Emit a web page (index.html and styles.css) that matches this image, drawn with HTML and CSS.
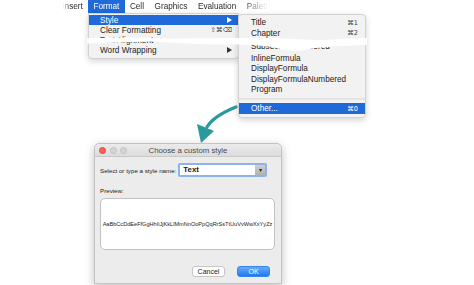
FILE: index.html
```html
<!DOCTYPE html>
<html lang="en">
<head>
  <meta charset="UTF-8">
  <title>Choose a custom style</title>
  <link rel="stylesheet" href="styles.css">
</head>
<body>

  <div class="menubar">
    <span class="menu-title">Insert</span>
    <span class="menu-title active">Format</span>
    <span class="menu-title">Cell</span>
    <span class="menu-title">Graphics</span>
    <span class="menu-title">Evaluation</span>
    <span class="menu-title">Palettes</span>
  </div>

  <ul class="menu format-menu">
    <li class="selected"><span>Style</span><span class="arrow"></span></li>
    <li><span>Clear Formatting</span><span class="key">⇧⌘⌫</span></li>
    <li class="cut"><span>Text Alignment ↵</span></li>
    <li><span>Word Wrapping</span><span class="arrow"></span></li>
  </ul>

  <ul class="menu style-menu">
    <li><span>Title</span><span class="key">⌘1</span></li>
    <li><span>Chapter</span><span class="key">⌘2</span></li>
    <li class="cut"><span>SubsectionNumbered</span></li>
    <li><span>InlineFormula</span></li>
    <li><span>DisplayFormula</span></li>
    <li><span>DisplayFormulaNumbered</span></li>
    <li><span>Program</span></li>
    <li class="sep"></li>
    <li class="selected other"><span>Other...</span><span class="key">⌘0</span></li>
  </ul>

  <!-- torn strip across both menus, and the pointer arrow -->
  <svg class="overlay" viewBox="0 0 474 285" width="474" height="285">
    <polygon class="tear" points="87,38 130,37.5 170,38.5 238,38 280,38.5 320,40 367,38 367,45 340,46 315,48 300,51 285,50 272,47 255,45 238,44.5 210,44.5 180,43 150,41.5 120,42.5 87,43.5"/>
    <path class="pointer-line" d="M236 107 C226 111 213 117 207 127"/>
    <polygon class="pointer-head" points="197,124 214,131 201,143"/>
  </svg>

  <div class="dialog">
    <div class="titlebar">
      <div class="lights">
        <span class="light close"></span>
        <span class="light"></span>
        <span class="light"></span>
      </div>
      <div class="title">Choose a custom style</div>
    </div>

    <div class="dialog-body">
      <div class="field-row">
        <label class="small">Select or type a style name:</label>
        <div class="combo">
          <span class="combo-text">Text</span>
          <span class="combo-btn">▾</span>
        </div>
      </div>

      <div class="small preview-label">Preview:</div>
      <div class="preview">AaBbCcDdEeFfGgHhIiJjKkLlMmNnOoPpQqRrSsTtUuVvWwXxYyZz</div>

      <div class="buttons">
        <button class="btn">Cancel</button>
        <button class="btn primary">OK</button>
      </div>
    </div>
  </div>

</body>
</html>
```

FILE: styles.css
```css
* { box-sizing: border-box; }
body { margin: 0; width: 474px; height: 285px; overflow: hidden; background: #fff; font-family: "Liberation Sans", Arial, sans-serif; color: #222; position: relative; }

/* menu bar */
.menubar { display: flex; height: 13px; padding-left: 57px; font-size: 8.2px; line-height: 13px; color: #2a2a2a; -webkit-mask-image: linear-gradient(to right, transparent 63px, #000 69px, #000 242px, transparent 268px); mask-image: linear-gradient(to right, transparent 63px, #000 69px, #000 242px, transparent 268px); }
.menu-title { padding: 0 5.3px; white-space: nowrap; }
.menu-title.active { background: #1f6ad8; color: #fff; }

/* dropdown menus */
.menu { position: absolute; margin: 0; list-style: none; background: #f2f2f2; border: 1px solid #d2d2d2; box-shadow: 0 2px 6px rgba(0,0,0,.18); font-size: 8.2px; color: #222; }
.menu li { display: flex; align-items: center; justify-content: space-between; white-space: nowrap; }
.menu .selected { background: #1f6ad8; color: #fff; }
.key { font-family: "DejaVu Sans", sans-serif; font-size: 6.6px; color: #444; }
.selected .key { color: #fff; }
.arrow { width: 0; height: 0; border-left: 5px solid #333; border-top: 3px solid transparent; border-bottom: 3px solid transparent; }
.selected .arrow { border-left-color: #fff; }

.format-menu { left: 88px; top: 13px; width: 151px; padding: 1px 0 3px; border-radius: 0 0 4px 4px; }
.format-menu li { height: 10px; padding: 0 6px 0 11px; }
.format-menu li.cut { align-items: flex-start; line-height: 8px; padding-top: 1.5px; }

.style-menu { left: 238px; top: 14px; width: 128px; padding: 2.5px 0 3px; border-radius: 4px; }
.style-menu li { height: 10.5px; padding: 0 7px 0 12px; }
.style-menu li.cut { height: 14.5px; align-items: flex-end; padding-bottom: 2px; }
.style-menu li.sep { height: 8px; border-bottom: 1px solid #d8d8d8; transform: translateY(-3.5px); }
.style-menu li.other { height: 11px; }

/* overlay: tear + pointer arrow */
.overlay { position: absolute; left: 0; top: 0; pointer-events: none; }
.tear { fill: #fff; }
.pointer-line { fill: none; stroke: #2b9a9c; stroke-width: 3.4; stroke-linecap: round; }
.pointer-head { fill: #2b9a9c; }

/* dialog */
.dialog { width: 188px; margin: 130px 0 0 94px; background: #ececec; border: 1px solid #c4c4c4; border-radius: 5px 5px 0 0; box-shadow: 0 3px 10px rgba(0,0,0,.25); }
.titlebar { display: grid; grid-template-columns: 1fr auto 1fr; align-items: center; height: 13px; padding: 0 4px; background: linear-gradient(#ebebeb, #dcdcdc); border-bottom: 1px solid #c9c9c9; border-radius: 5px 5px 0 0; }
.lights { display: flex; gap: 3.6px; }
.light { width: 7px; height: 7px; border-radius: 50%; background: #d4d4d4; border: 1px solid #c2c2c2; }
.light.close { background: #fc605b; border-color: #de4a44; }
.title { font-size: 7.8px; color: #4a4a4a; }

.dialog-body { padding: 6px 6px 6px 5px; }
.small { font-size: 6.2px; color: #222; }
.field-row { display: flex; align-items: center; gap: 2px; }
.combo { display: flex; width: 89px; height: 14px; border: 2px solid #8db3ea; border-radius: 2px; background: #fff; }
.combo-text { flex: 1; padding-left: 3px; font-size: 7.8px; font-weight: bold; line-height: 10px; color: #1a1a1a; }
.combo-btn { width: 10px; background: linear-gradient(#d0d0d0, #b0b0b0); font-size: 6px; line-height: 10px; text-align: center; color: #222; }

.preview-label { margin-top: 10px; line-height: 8px; }
.preview { display: flex; align-items: center; justify-content: center; width: 175px; height: 52px; margin-top: 3px; background: #fff; border: 1px solid #c2c2c2; border-radius: 5px; font-size: 5.6px; color: #222; white-space: nowrap; }

.buttons { display: flex; justify-content: flex-end; gap: 12px; margin: 16px 5px 0 0; }
.btn { width: 33px; height: 11px; padding: 0; font-family: inherit; font-size: 7px; line-height: 9px; color: #222; background: #fff; border: 1px solid #c6c6c6; border-radius: 3px; }
.btn.primary { background: linear-gradient(#6aaaf8, #1d79ef); border-color: #3a84e6; color: #fff; }
```
